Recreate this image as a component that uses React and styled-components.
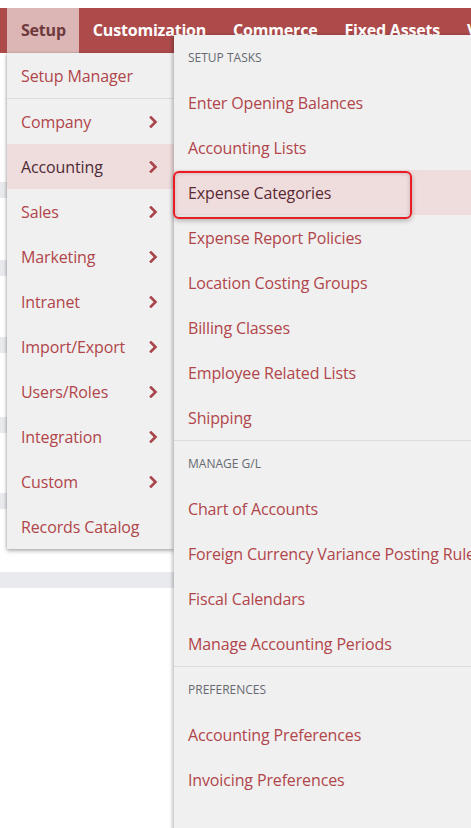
import React from "react";
import styled, { createGlobalStyle } from "styled-components";

const Global = createGlobalStyle`
  html, body { margin: 0; padding: 0; background: #ffffff; }
  body { font-family: "Open Sans", "Liberation Sans", sans-serif; overflow: hidden; }
`;

const Page = styled.div`
  position: relative;
  width: 471px;
  height: 828px;
  overflow: hidden;
  padding-top: 8px;
  box-sizing: border-box;
`;

const NavBar = styled.nav`
  display: flex;
  align-items: stretch;
  height: 45px;
  background: #ad4a4a;
  padding-left: 7px;
  white-space: nowrap;
`;

const NavItem = styled.div`
  display: flex;
  align-items: center;
  padding: 0 13px 2px 14px;
  font-size: 16px;
  font-weight: 700;
  letter-spacing: -0.2px;
  color: ${(p) => (p.$active ? "#6e3a3d" : "#ffffff")};
  background: ${(p) => (p.$active ? "#dcb5b5" : "transparent")};
`;

const Backdrop = styled.div`
  display: flex;
  flex-direction: column;
`;

const Stripe = styled.div`
  height: 16px;
  margin-top: ${(p) => p.$gap}px;
  background: #e9eaed;
`;

const LeftMenu = styled.ul`
  position: absolute;
  left: 7px;
  top: 53px;
  width: 167px;
  margin: 0;
  padding: 0;
  list-style: none;
  background: #f0f0f0;
  box-shadow: 0 2px 4px rgba(0, 0, 0, 0.3), -1px 0 2px rgba(0, 0, 0, 0.12);
  z-index: 2;
`;

const LeftItem = styled.li`
  display: flex;
  align-items: center;
  justify-content: space-between;
  padding: 0 14px 0 14px;
  box-sizing: border-box;
  font-size: 16px;
  letter-spacing: -0.12px;
  color: ${(p) => (p.$active ? "#4d2b36" : "#b0454a")};
  background: ${(p) => (p.$active ? "#efdcdc" : "transparent")};
  border-bottom: ${(p) => (p.$sep ? "1px solid #dcdcdc" : "none")};
  height: ${(p) => (p.$sep ? "46px" : "45px")};
`;

const Chevron = styled.svg`
  width: 9px;
  height: 12px;
  margin-right: 2px;
`;

const SubMenu = styled.div`
  position: absolute;
  left: 174px;
  top: 35px;
  width: 320px;
  height: 820px;
  background: #f0f0f0;
  box-shadow: -2px 0 3px rgba(0, 0, 0, 0.22);
  z-index: 3;
`;

const Section = styled.div`
  border-bottom: ${(p) => (p.$sep ? "1px solid #dcdcdc" : "none")};
`;

const SectionTitle = styled.div`
  display: flex;
  align-items: center;
  height: 45px;
  padding-left: 14px;
  font-size: 12px;
  color: #666a70;
`;

const SubItem = styled.div`
  position: relative;
  display: flex;
  align-items: center;
  height: 45px;
  padding-left: 14px;
  font-size: 16px;
  letter-spacing: -0.14px;
  white-space: nowrap;
  color: ${(p) => (p.$active ? "#5a2a35" : "#b0454a")};
  background: ${(p) => (p.$active ? "#efdcdc" : "transparent")};
`;

const Callout = styled.div`
  position: absolute;
  left: -1px;
  top: 1px;
  width: 235px;
  height: 44px;
  border: 2px solid #ec1c24;
  border-radius: 6px;
  box-shadow: 0 2px 5px rgba(0, 0, 0, 0.25), inset 0 0 4px rgba(0, 0, 0, 0.18);
  pointer-events: none;
`;

const ChevronIcon = () => (
  <Chevron viewBox="0 0 9 12">
    <path d="M2 1.5 L6.5 6 L2 10.5" fill="none" stroke="#a8454a" strokeWidth="2.6" strokeLinecap="square" />
  </Chevron>
);

const leftItems = [
  { label: "Company", arrow: true },
  { label: "Accounting", arrow: true, active: true },
  { label: "Sales", arrow: true },
  { label: "Marketing", arrow: true },
  { label: "Intranet", arrow: true },
  { label: "Import/Export", arrow: true },
  { label: "Users/Roles", arrow: true },
  { label: "Integration", arrow: true },
  { label: "Custom", arrow: true },
  { label: "Records Catalog", arrow: false },
];

const sections = [
  {
    title: "SETUP TASKS",
    items: [
      "Enter Opening Balances",
      "Accounting Lists",
      "Expense Categories",
      "Expense Report Policies",
      "Location Costing Groups",
      "Billing Classes",
      "Employee Related Lists",
      "Shipping",
    ],
  },
  {
    title: "MANAGE G/L",
    items: [
      "Chart of Accounts",
      "Foreign Currency Variance Posting Rules",
      "Fiscal Calendars",
      "Manage Accounting Periods",
    ],
  },
  {
    title: "PREFERENCES",
    items: ["Accounting Preferences", "Invoicing Preferences"],
  },
];

export default function App() {
  return (
    <>
      <Global />
      <Page>
        <NavBar>
          <NavItem $active>Setup</NavItem>
          <NavItem>Customization</NavItem>
          <NavItem>Commerce</NavItem>
          <NavItem>Fixed Assets</NavItem>
          <NavItem>Vendors</NavItem>
        </NavBar>
        <Backdrop>
          <Stripe $gap={129} />
          <Stripe $gap={62} />
          <Stripe $gap={61} />
          <Stripe $gap={64} />
          <Stripe $gap={60} />
          <Stripe $gap={63} />
        </Backdrop>

        <LeftMenu>
          <LeftItem $sep>Setup Manager</LeftItem>
          {leftItems.map((it) => (
            <LeftItem key={it.label} $active={it.active}>
              <span>{it.label}</span>
              {it.arrow && <ChevronIcon />}
            </LeftItem>
          ))}
        </LeftMenu>

        <SubMenu>
          {sections.map((s, i) => (
            <Section key={s.title} $sep={i < sections.length - 1}>
              <SectionTitle>{s.title}</SectionTitle>
              {s.items.map((label) => (
                <SubItem key={label} $active={label === "Expense Categories"}>
                  {label}
                  {label === "Expense Categories" && <Callout />}
                </SubItem>
              ))}
            </Section>
          ))}
        </SubMenu>
      </Page>
    </>
  );
}
